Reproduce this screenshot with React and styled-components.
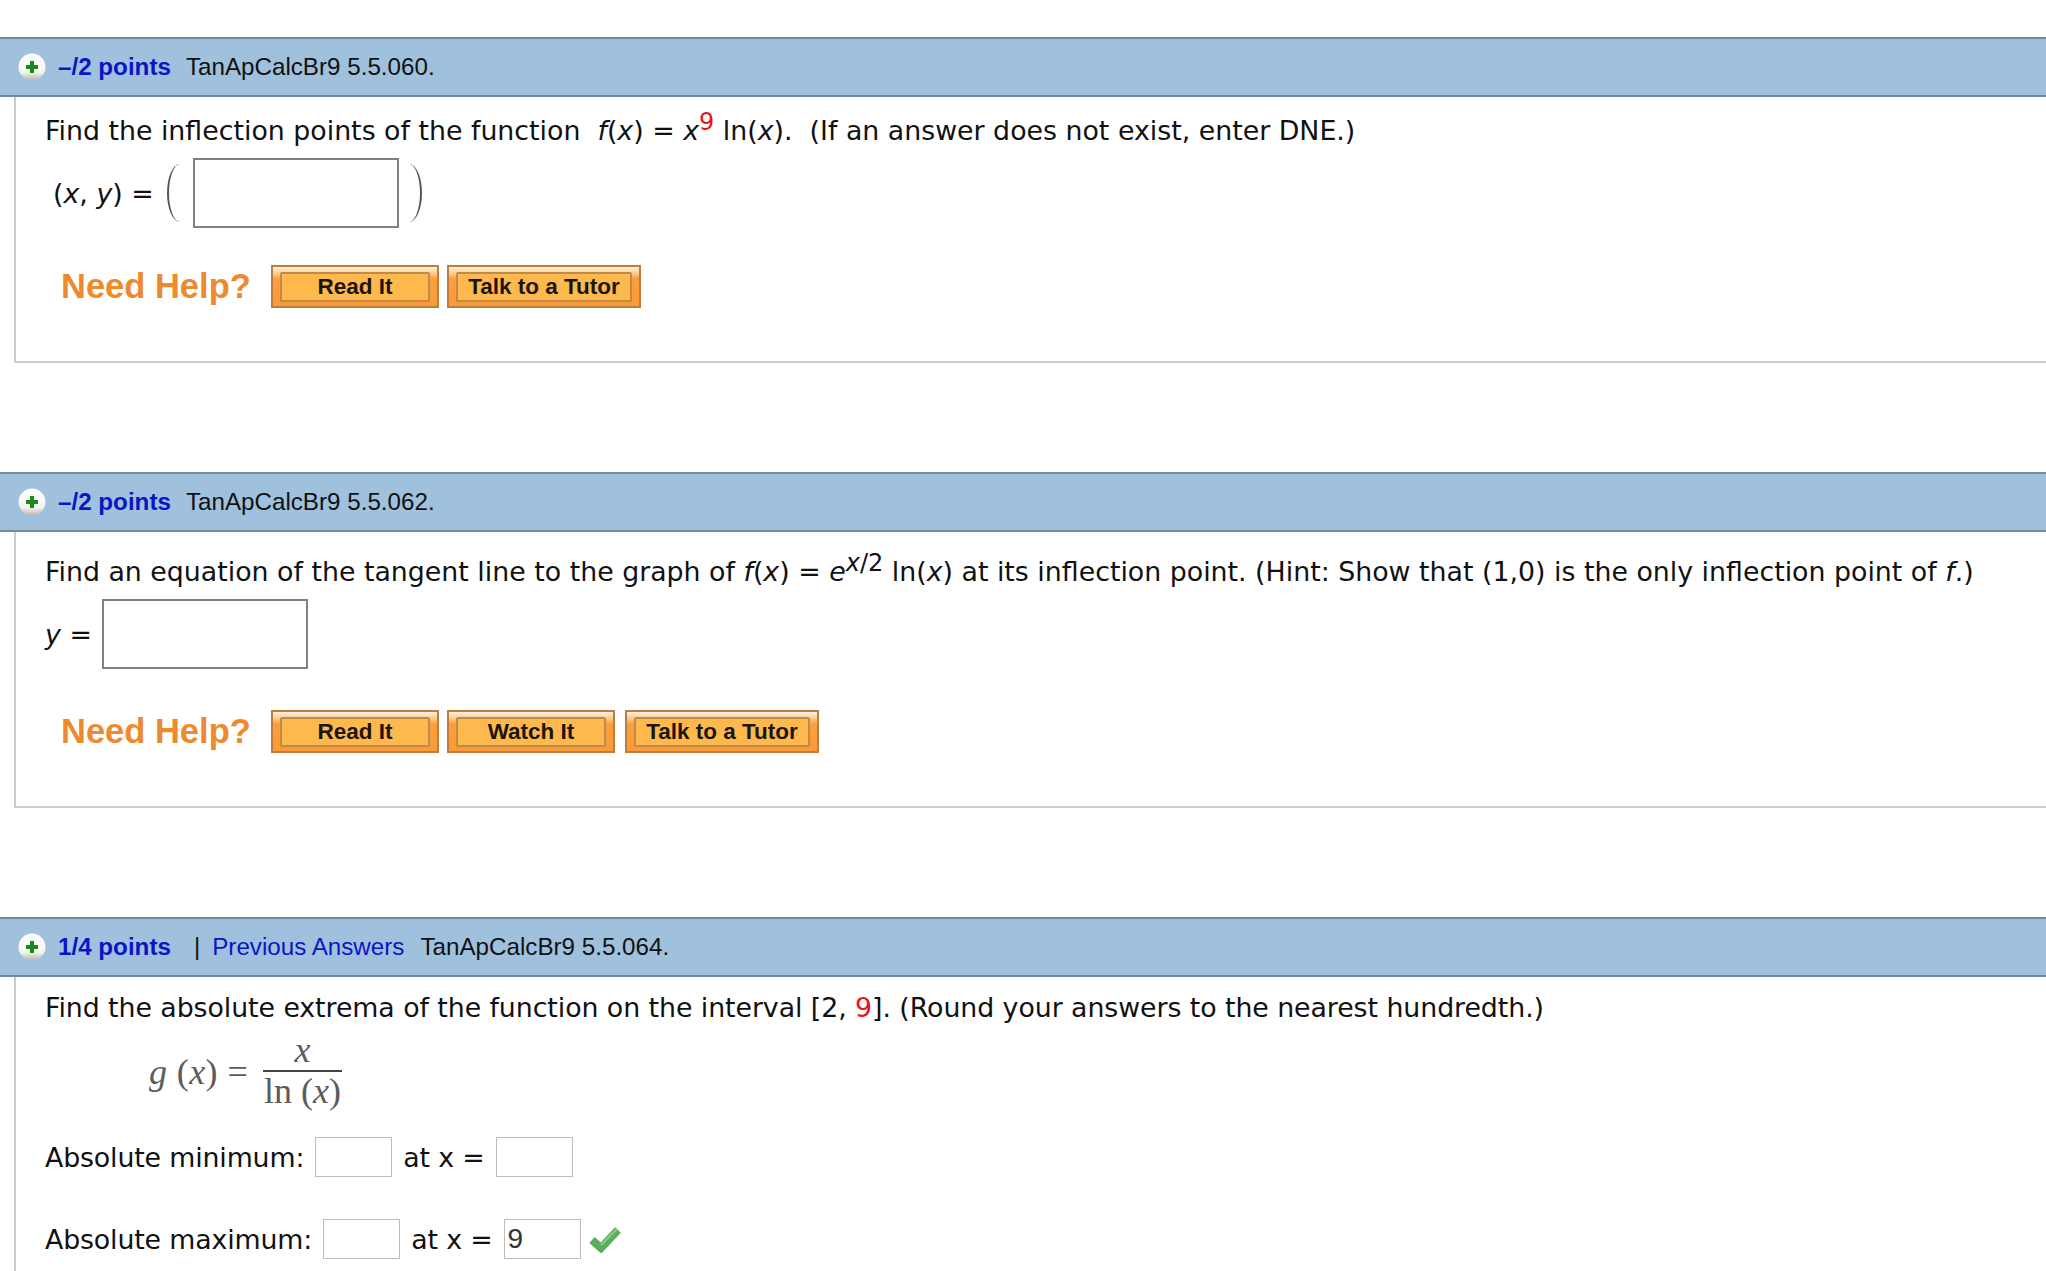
import React from 'react';
import styled, { createGlobalStyle } from 'styled-components';

const Global = createGlobalStyle`
    html, body {
        margin: 0;
        height: 100%;
        overflow: hidden;
        background: #fff;
    }
`;

const Page = styled.div`
    padding-top: 37px;
    font-family: 'DejaVu Sans', Verdana, sans-serif;
    font-size: 26.8px;
    color: #111;
`;

const Section = styled.section`
    margin-bottom: 109px;

    &:last-child {
        margin-bottom: 0;
    }
`;

const Header = styled.div`
    box-sizing: border-box;
    display: flex;
    align-items: center;
    height: 60px;
    padding-left: 18px;
    background: #9fc1dd;
    border-top: 2px solid #728b9f;
    border-bottom: 2px solid #728b9f;
    font-family: 'Liberation Sans', Arial, sans-serif;
    font-size: 24.2px;
    white-space: nowrap;
`;

const AddButton = styled.svg`
    width: 28px;
    height: 28px;
    margin-right: 12px;
    flex: none;
`;

const Points = styled.span`
    font-weight: bold;
    color: #0a16c4;
    margin-right: 15px;
`;

const Pipe = styled.span`
    margin: 0 12px 0 8px;
    color: #111;
`;

const PrevLink = styled.a`
    color: #0a16c4;
    margin-right: 16px;
`;

const Body = styled.div`
    margin-left: 14px;
    border-left: 2px solid #ccc;
    border-bottom: ${p => (p.open ? 'none' : '2px solid #ccc')};
    padding: ${p => p.pad};
    height: ${p => p.h}px;
    box-sizing: border-box;
`;

const Line = styled.div`
    display: flex;
    align-items: baseline;
    height: ${p => p.h}px;
    line-height: ${p => p.h}px;
    white-space: pre;
    margin-bottom: ${p => p.mb || 0}px;
    letter-spacing: ${p => p.ls || 0}px;
`;

const Sup = styled.sup`
    color: ${p => (p.red ? '#e8121a' : 'inherit')};
    font-size: 24px;
    line-height: 0;
    position: relative;
    top: -10px;
    vertical-align: baseline;
`;

const Red = styled.span`
    color: #e8121a;
`;

const AnswerRow = styled.div`
    display: flex;
    align-items: center;
    height: ${p => p.h}px;
    margin-left: ${p => p.ml || 0}px;
    margin-bottom: ${p => p.mb || 0}px;
    letter-spacing: ${p => p.ls || 0}px;
    white-space: pre;
`;

const BigInput = styled.div`
    box-sizing: border-box;
    width: 206px;
    height: 70px;
    background: #fff;
    border: 2px solid #808080;
    margin-left: ${p => p.ml || 0}px;
`;

const Paren = styled.span`
    box-sizing: border-box;
    display: block;
    width: 13px;
    height: 58px;
    border-radius: ${p => (p.right ? '0 100% 100% 0 / 0 50% 50% 0' : '100% 0 0 100% / 50% 0 0 50%')};
    border-left: ${p => (p.right ? 'none' : '2.5px solid #555')};
    border-right: ${p => (p.right ? '2.5px solid #555' : 'none')};
    margin-left: ${p => p.ml || 0}px;
`;

const HelpRow = styled.div`
    display: flex;
    align-items: center;
    height: 43px;
    margin-left: 16px;
`;

const NeedHelp = styled.span`
    font-family: 'Liberation Sans', Arial, sans-serif;
    font-size: 34.5px;
    color: #ee8a2e;
    font-weight: bold;
    width: 210px;
    white-space: nowrap;
`;

const HelpButton = styled.div`
    box-sizing: border-box;
    width: ${p => p.w}px;
    height: 43px;
    margin-right: ${p => p.mr || 8}px;
    padding: 5px 7px 4px;
    background: linear-gradient(#fff0e0 0, #fbd8a8 12%, #fb9f3e 30%, #fb9a35 100%);
    border: 2px solid #bd7d3e;
`;

const HelpFace = styled.div`
    box-sizing: border-box;
    height: 100%;
    display: flex;
    align-items: center;
    justify-content: center;
    background: #fdb94e;
    border: 2px solid #c08a48;
    border-radius: 2px;
    font-family: 'Liberation Sans', Arial, sans-serif;
    font-weight: bold;
    font-size: 22.5px;
    color: #1c1608;
    white-space: nowrap;
`;

const SmallInput = styled.div`
    box-sizing: border-box;
    width: 77px;
    height: 40px;
    border: 1px solid #bdbdbd;
    padding-left: 3px;
    margin-left: ${p => p.ml || 0}px;
    margin-right: ${p => p.mr || 0}px;
    font-family: 'Liberation Sans', Arial, sans-serif;
    font-size: 28px;
    line-height: 38px;
    color: #333;
`;

const Formula = styled.div`
    display: flex;
    align-items: center;
    height: 75px;
    margin: 0 0 22px 104px;
    font-family: 'Liberation Serif', 'Times New Roman', serif;
    font-size: 36px;
    color: #5c5c5c;
`;

const FormulaLeft = styled.span`
    letter-spacing: 0.4px;
    margin-bottom: 12px;
`;

const Frac = styled.div`
    display: flex;
    flex-direction: column;
    align-items: center;
    width: 79px;
    height: 75px;
    margin-left: 15px;
`;

const FracTop = styled.i`
    box-sizing: border-box;
    width: 100%;
    height: 32px;
    line-height: 20px;
    text-align: center;
    border-bottom: 2px solid #444;
`;

const FracBottom = styled.span`
    height: 43px;
    line-height: 38px;
    white-space: nowrap;
`;

const CheckMark = styled.svg`
    flex: none;
    margin-left: 8px;
    width: 32px;
    height: 28px;
`;

const Check = () => (
    <CheckMark viewBox="0 0 32 28">
        <path d="M3 15 L12 23 L29 5" fill="none" stroke="#59ad5b" strokeWidth="8" />
        <path d="M12 20 L28 4" fill="none" stroke="#85cf85" strokeWidth="2" />
    </CheckMark>
);

const Plus = () => (
    <AddButton viewBox="0 0 28 28">
        <defs>
            <linearGradient id="disc" x1="0" y1="0" x2="0" y2="1">
                <stop offset="0" stopColor="#fff" />
                <stop offset="0.7" stopColor="#f3f3ee" />
                <stop offset="1" stopColor="#b8b8b0" />
            </linearGradient>
        </defs>
        <circle cx="14" cy="14" r="13.5" fill="url(#disc)" />
        <path d="M14 8 V20 M8 14 H20" stroke="#1b8a1e" strokeWidth="4" />
    </AddButton>
);

const Help = ({ buttons }) => (
    <HelpRow>
        <NeedHelp>Need Help?</NeedHelp>
        {buttons.map(b => (
            <HelpButton key={b.label} w={b.w} mr={b.mr}>
                <HelpFace>{b.label}</HelpFace>
            </HelpButton>
        ))}
    </HelpRow>
);

const App = () => (
    <Page>
        <Global />
        <Section>
            <Header>
                <Plus />
                <Points>–/2 points</Points>
                TanApCalcBr9 5.5.060.
            </Header>
            <Body h={266} pad="17px 0 0 29px">
                <Line h={34} mb={10}>
                    Find the inflection points of the function  <i>f</i>(<i>x</i>) = <i>x</i><Sup red>9</Sup> ln(<i>x</i>).  (If an answer does not exist, enter DNE.)
                </Line>
                <AnswerRow h={70} ml={8} mb={37}>
                    (<i>x</i>, <i>y</i>) =
                    <Paren ml={13} />
                    <BigInput ml={13} />
                    <Paren right ml={10} />
                </AnswerRow>
                <Help
                    buttons={[
                        { label: 'Read It', w: 168 },
                        { label: 'Talk to a Tutor', w: 194 },
                    ]}
                />
            </Body>
        </Section>
        <Section>
            <Header>
                <Plus />
                <Points>–/2 points</Points>
                TanApCalcBr9 5.5.062.
            </Header>
            <Body h={276} pad="23px 0 0 29px">
                <Line h={34} mb={10}>
                    Find an equation of the tangent line to the graph of <i>f</i>(<i>x</i>) = <i>e</i><Sup><i>x</i>/2</Sup> ln(<i>x</i>) at its inflection point. (Hint: Show that (1,0) is the only inflection point of <i>f</i>.)
                </Line>
                <AnswerRow h={70} mb={41}>
                    <i>y</i> =
                    <BigInput ml={10} />
                </AnswerRow>
                <Help
                    buttons={[
                        { label: 'Read It', w: 168 },
                        { label: 'Watch It', w: 168, mr: 10 },
                        { label: 'Talk to a Tutor', w: 194 },
                    ]}
                />
            </Body>
        </Section>
        <Section>
            <Header>
                <Plus />
                <Points>1/4 points</Points>
                <Pipe>|</Pipe>
                <PrevLink>Previous Answers</PrevLink>
                TanApCalcBr9 5.5.064.
            </Header>
            <Body open h={294} pad="14px 0 0 29px">
                <Line h={34} mb={15} ls={-0.07}>
                    Find the absolute extrema of the function on the interval [2, <Red>9</Red>]. (Round your answers to the nearest hundredth.)
                </Line>
                <Formula>
                    <FormulaLeft><i>g</i> (<i>x</i>) =</FormulaLeft>
                    <Frac>
                        <FracTop>x</FracTop>
                        <FracBottom>ln (<i>x</i>)</FracBottom>
                    </Frac>
                </Formula>
                <AnswerRow h={40} mb={42} ls={-0.15}>
                    Absolute minimum:
                    <SmallInput ml={11} mr={11} />
                    at x =
                    <SmallInput ml={11} />
                </AnswerRow>
                <AnswerRow h={40} ls={-0.15}>
                    Absolute maximum:
                    <SmallInput ml={11} mr={11} />
                    at x =
                    <SmallInput ml={11}>9</SmallInput>
                    <Check />
                </AnswerRow>
            </Body>
        </Section>
    </Page>
);

export default App;
